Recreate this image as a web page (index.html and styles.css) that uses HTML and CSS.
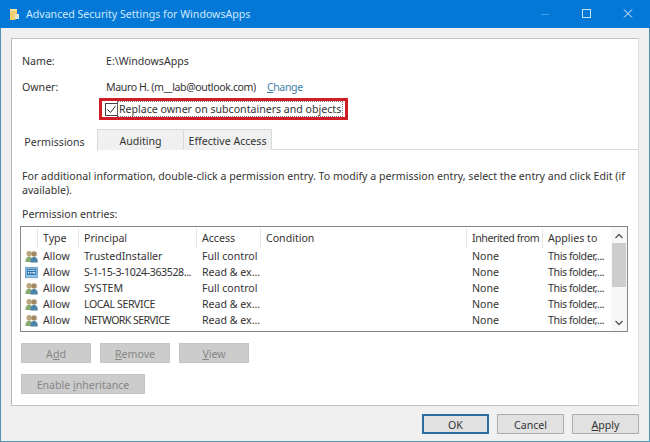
FILE: index.html
```html
<!DOCTYPE html>
<html lang="en">
<head>
  <meta charset="UTF-8" />
  <title>Advanced Security Settings for WindowsApps</title>
  <link rel="stylesheet" href="styles.css">
</head>
<body>
  <div class="window">
    <svg width="0" height="0" class="defs">
      <symbol id="users" viewBox="0 0 14 14">
        <circle cx="4.5" cy="4" r="2.9" fill="#b9a67c"/>
        <path d="M0.5 13 C0.5 8.5 2.5 7 4.5 7 C6.5 7 8 8.5 8 13 Z" fill="#86ab6d"/>
        <circle cx="9.8" cy="4.2" r="2.9" fill="#a58a62"/>
        <path d="M5.8 13.5 C5.8 9 7.5 7.5 9.8 7.5 C12 7.5 13.8 9 13.8 13.5 Z" fill="#4f83a8"/>
      </symbol>
      <symbol id="package" viewBox="0 0 14 14">
        <rect x="0.5" y="1.5" width="13" height="11" fill="#8cc3ea" stroke="#6f9fc4"/>
        <rect x="2" y="3" width="10" height="6.5" fill="#2f6fa8"/>
        <path d="M3 4h1.5v1.5H3zM5.5 4H7v1.5H5.5zM8 4h1.5v1.5H8zM10 4h1v1.5h-1zM3 6.5h1.5V8H3zM5.5 6.5H7V8H5.5zM8 6.5h3V8H8z" fill="#dcefff"/>
      </symbol>
    </svg>

    <header class="titlebar">
      <svg class="title-icon" width="9" height="11" viewBox="0 0 9 11">
        <path d="M0 0h7v8l-2 3H0z" fill="#f3cf70"/>
        <path d="M5 5h4v5H5z" fill="#e6e4d6"/>
        <path d="M0 0h7v2H0z" fill="#f9e4a0"/>
      </svg>
      <span class="title-text">Advanced Security Settings for WindowsApps</span>
      <div class="window-controls">
        <svg width="42" height="28" viewBox="0 0 42 28"><path d="M18 14.5h8" stroke="#3f9ae6" stroke-width="1"/></svg>
        <svg width="42" height="28" viewBox="0 0 42 28"><rect x="17.5" y="9.5" width="8" height="8" fill="none" stroke="#bfe3fb" stroke-width="1"/></svg>
        <svg width="42" height="28" viewBox="0 0 42 28"><path d="M17 9.5l8 8M25 9.5l-8 8" stroke="#e6f4fd" stroke-width="1"/></svg>
      </div>
    </header>

    <div class="content">
      <main class="panel">
        <div class="info-row name-row">
          <span class="info-label">Name:</span>
          <span>E:\WindowsApps</span>
        </div>
        <div class="info-row owner-row">
          <span class="info-label">Owner:</span>
          <span class="tight">Mauro H. (m__lab@outlook.com)</span>
          <a class="change-link tight"><u>C</u>hange</a>
        </div>
        <div class="replace-wrap">
          <label class="replace-box">
            <svg class="checkbox" width="13" height="13" viewBox="0 0 13 13">
              <rect x="0.5" y="0.5" width="12" height="12" fill="#fff" stroke="#444"/>
              <path d="M2.5 6.5l3 3 5-6.5" fill="none" stroke="#333" stroke-width="1"/>
            </svg>
            <span class="replace-text">Replace owner on subcontainers and objects</span>
          </label>
        </div>

        <nav class="tabs">
          <div class="tab tab-active">Permissions</div>
          <div class="tab tab-auditing">Auditing</div>
          <div class="tab tab-access">Effective Access</div>
        </nav>

        <section class="tab-body">
          <p class="intro">For additional information, double-click a permission entry. To modify a permission entry, select the entry and click Edit (if available).</p>
          <p class="entries-label">Permission entries:</p>

          <div class="entries">
            <div class="entries-list">
              <div class="entry entry-head">
                <span></span>
                <span>Type</span>
                <span>Principal</span>
                <span>Access</span>
                <span>Condition</span>
                <span class="tight">Inherited from</span>
                <span>Applies to</span>
              </div>
              <div class="entry">
                <svg class="entry-icon"><use href="#users"/></svg>
                <span>Allow</span><span>TrustedInstaller</span><span>Full control</span><span></span><span>None</span><span class="tight">This folder,...</span>
              </div>
              <div class="entry">
                <svg class="entry-icon"><use href="#package"/></svg>
                <span>Allow</span><span class="tight">S-1-15-3-1024-363528...</span><span>Read &amp; ex...</span><span></span><span>None</span><span class="tight">This folder,...</span>
              </div>
              <div class="entry">
                <svg class="entry-icon"><use href="#users"/></svg>
                <span>Allow</span><span>SYSTEM</span><span>Full control</span><span></span><span>None</span><span class="tight">This folder,...</span>
              </div>
              <div class="entry">
                <svg class="entry-icon"><use href="#users"/></svg>
                <span>Allow</span><span class="tight">LOCAL SERVICE</span><span>Read &amp; ex...</span><span></span><span>None</span><span class="tight">This folder,...</span>
              </div>
              <div class="entry">
                <svg class="entry-icon"><use href="#users"/></svg>
                <span>Allow</span><span class="tighter">NETWORK SERVICE</span><span>Read &amp; ex...</span><span></span><span>None</span><span class="tight">This folder,...</span>
              </div>
              <div class="entry">
                <svg class="entry-icon"><use href="#users"/></svg>
              </div>
            </div>
            <div class="scrollbar">
              <svg class="scroll-arrow" width="16" height="16" viewBox="0 0 16 16"><path d="M4.5 11l3.5-3.5 3.5 3.5" fill="none" stroke="#555" stroke-width="1.3"/></svg>
              <div class="scroll-track"><div class="scroll-thumb"></div></div>
              <svg class="scroll-arrow" width="16" height="16" viewBox="0 0 16 16"><path d="M4.5 6l3.5 3.5 3.5-3.5" fill="none" stroke="#555" stroke-width="1.3"/></svg>
            </div>
          </div>

          <div class="btn-row">
            <button class="btn btn-off">A<u>d</u>d</button>
            <button class="btn btn-off"><u>R</u>emove</button>
            <button class="btn btn-off"><u>V</u>iew</button>
          </div>
          <button class="btn btn-off btn-wide">Enable <u>i</u>nheritance</button>
        </section>
      </main>

      <footer class="dialog-actions">
        <button class="btn btn-default">OK</button>
        <button class="btn">Cancel</button>
        <button class="btn"><u>A</u>pply</button>
      </footer>
    </div>
  </div>
</body>
</html>
```

FILE: styles.css
```css
* { box-sizing: border-box; }
body {
  margin: 0;
  font-family: "Noto Sans", "Open Sans", sans-serif;
  font-size: 10.6px;
  color: #333;
  background-color: #f0f0f0;
}
.defs { position: absolute; }
.tight { letter-spacing: -0.4px; }
.tighter { letter-spacing: -0.6px; }
.window {
  width: 650px;
  height: 442px;
  display: flex;
  flex-direction: column;
  overflow: hidden;
}

/* title bar */
.titlebar {
  height: 28px;
  flex: none;
  display: flex;
  align-items: center;
  padding-left: 10px;
  background-color: #0478d7;
  color: #cfe8fa;
}
.title-icon { margin-right: 7px; }
.window-controls {
  margin-left: auto;
  margin-right: 1px;
  display: flex;
}

.content {
  flex: 1;
  display: flex;
  flex-direction: column;
  padding: 10px 10px 0 10px;
  border: 1px solid #4d93ae;
  border-top: none;
  background-color: #f0f0f0;
}

/* white panel */
.panel {
  height: 368px;
  flex: none;
  background-color: #fff;
  border: 1px solid #c4c4c4;
  border-right-color: #dcdcdc;
  border-left-color: #b8b8b8;
}
.info-row {
  display: flex;
  align-items: center;
  padding-left: 10px;
}
.name-row { margin-top: 14px; height: 16px; }
.owner-row { margin-top: 10px; height: 16px; }
.info-label { width: 84px; }
.change-link { margin-left: 11px; color: #3f7fa8; }

.replace-wrap { padding-left: 87px; margin-top: 3px; }
.replace-box {
  display: flex;
  align-items: center;
  width: 249px;
  height: 22px;
  border: 3px solid #d01c24;
  padding-left: 3px;
}
.checkbox { flex: none; }
.replace-text {
  outline: 1px dotted #777;
  padding: 0 1px;
  white-space: nowrap;
}

/* tabs */
.tabs {
  display: flex;
  margin-top: 9px;
  height: 21px;
  border-bottom: 1px solid #d9d9d9;
}
.tab {
  height: 21px;
  padding-top: 2px;
  display: flex;
  align-items: center;
  justify-content: center;
  background-color: #f0f0f0;
  border: 1px solid #d9d9d9;
  border-left: none;
  border-bottom: none;
}
.tab-active {
  width: 86px;
  height: 22px;
  background-color: #fff;
  border-top-color: #fff;
  position: relative;
  z-index: 1;
}
.tab-auditing { width: 86px; }
.tab-access { width: 88px; }

.tab-body { padding: 0 8px; }
.intro {
  margin: 19px 0 0 2px;
  line-height: 14px;
}
.entries-label {
  margin: 10px 0 0 2px;
  line-height: 14px;
}

/* permission list */
.entries {
  margin-top: 5px;
  width: 608px;
  height: 106px;
  border: 1px solid #7f8a90;
  display: flex;
  overflow: hidden;
}
.entries-list { flex: 1; overflow: hidden; padding-top: 1px; }
.entry {
  display: grid;
  grid-template-columns: 16px 41px 118px 64px 206px 76px 69px;
  height: 16px;
  align-items: center;
  white-space: nowrap;
}
.entry span { padding-left: 6px; }
.entry-head {
  height: 20px;
  align-items: stretch;
}
.entry-head span {
  display: flex;
  align-items: center;
  border-left: 1px solid #e6e6e6;
  padding-left: 5px;
}
.entry-head span:first-child { border-left: none; }
.entry-icon { width: 13px; height: 13px; margin-left: 4px; }

.scrollbar {
  width: 16px;
  flex: none;
  display: flex;
  flex-direction: column;
  background-color: #f7f7f7;
}
.scroll-arrow { flex: none; }
.scroll-track { flex: 1; padding: 0 1px; }
.scroll-thumb { height: 44px; background-color: #cdcdcd; }

/* buttons */
.btn {
  width: 67px;
  height: 20px;
  padding: 1px 0 0 0;
  font-family: inherit;
  font-size: 10.6px;
  color: #333;
  background-color: #e1e1e1;
  border: 1px solid #adadad;
}
.btn-off {
  width: 70px;
  background-color: #cccccc;
  border-color: #c4c4c4;
  color: #868686;
}
.btn-row {
  display: flex;
  gap: 9px;
  margin: 11px 0 0 1px;
}
.btn-wide { display: block; width: 124px; margin: 11px 0 0 1px; }
.btn-default { border: 2px solid #2a6ea5; }
.dialog-actions {
  display: flex;
  justify-content: flex-end;
  gap: 8px;
  margin-top: 8px;
}
```
